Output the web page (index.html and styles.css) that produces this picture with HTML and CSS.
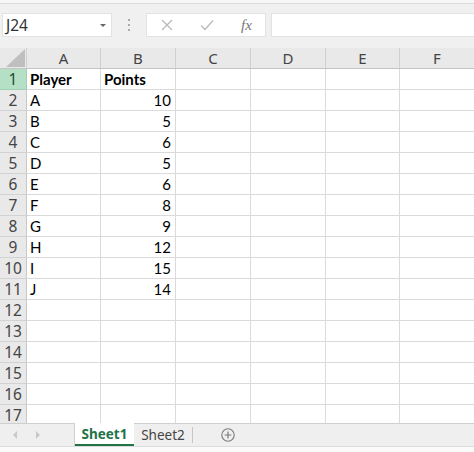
FILE: index.html
```html
<!DOCTYPE html>
<html>
<head>
<meta charset="utf-8">
<link rel="stylesheet" href="styles.css">
</head>
<body>
<div class="app">
  <div class="edge"></div>
  <div class="fbar">
    <div class="namebox"><span class="nb-text">J24</span><span class="nb-arrow"></span></div>
    <div class="dots"><i></i><i></i><i></i></div>
    <div class="fbtns">
      <svg class="ico" width="14" height="14" viewBox="0 0 14 14"><path d="M2 2L12 12M12 2L2 12" stroke="#b9b9b9" stroke-width="1.3" fill="none"/></svg>
      <svg class="ico" width="16" height="14" viewBox="0 0 16 14"><path d="M2 7.5L6 11.5L14 2.5" stroke="#b9b9b9" stroke-width="1.3" fill="none"/></svg>
      <span class="fx">fx</span>
    </div>
    <div class="finput"></div>
  </div>
  <div class="sheet">
    <div class="grid">
      <div class="corner"><svg width="19" height="18" viewBox="0 0 19 18"><path d="M0 18L19 18L19 0Z" fill="#bfbfbf"/></svg></div>
      <div class="ch">A</div><div class="ch">B</div><div class="ch">C</div><div class="ch">D</div><div class="ch">E</div><div class="ch last">F</div>

      <div class="rh sel">1</div><div class="c b">Player</div><div class="c b">Points</div><div class="c"></div><div class="c"></div><div class="c"></div><div class="c last"></div>
      <div class="rh">2</div><div class="c">A</div><div class="c n">10</div><div class="c"></div><div class="c"></div><div class="c"></div><div class="c last"></div>
      <div class="rh">3</div><div class="c">B</div><div class="c n">5</div><div class="c"></div><div class="c"></div><div class="c"></div><div class="c last"></div>
      <div class="rh">4</div><div class="c">C</div><div class="c n">6</div><div class="c"></div><div class="c"></div><div class="c"></div><div class="c last"></div>
      <div class="rh">5</div><div class="c">D</div><div class="c n">5</div><div class="c"></div><div class="c"></div><div class="c"></div><div class="c last"></div>
      <div class="rh">6</div><div class="c">E</div><div class="c n">6</div><div class="c"></div><div class="c"></div><div class="c"></div><div class="c last"></div>
      <div class="rh">7</div><div class="c">F</div><div class="c n">8</div><div class="c"></div><div class="c"></div><div class="c"></div><div class="c last"></div>
      <div class="rh">8</div><div class="c">G</div><div class="c n">9</div><div class="c"></div><div class="c"></div><div class="c"></div><div class="c last"></div>
      <div class="rh">9</div><div class="c">H</div><div class="c n">12</div><div class="c"></div><div class="c"></div><div class="c"></div><div class="c last"></div>
      <div class="rh">10</div><div class="c">I</div><div class="c n">15</div><div class="c"></div><div class="c"></div><div class="c"></div><div class="c last"></div>
      <div class="rh">11</div><div class="c">J</div><div class="c n">14</div><div class="c"></div><div class="c"></div><div class="c"></div><div class="c last"></div>
      <div class="rh">12</div><div class="c"></div><div class="c"></div><div class="c"></div><div class="c"></div><div class="c"></div><div class="c last"></div>
      <div class="rh">13</div><div class="c"></div><div class="c"></div><div class="c"></div><div class="c"></div><div class="c"></div><div class="c last"></div>
      <div class="rh">14</div><div class="c"></div><div class="c"></div><div class="c"></div><div class="c"></div><div class="c"></div><div class="c last"></div>
      <div class="rh">15</div><div class="c"></div><div class="c"></div><div class="c"></div><div class="c"></div><div class="c"></div><div class="c last"></div>
      <div class="rh">16</div><div class="c"></div><div class="c"></div><div class="c"></div><div class="c"></div><div class="c"></div><div class="c last"></div>
      <div class="rh">17</div><div class="c"></div><div class="c"></div><div class="c"></div><div class="c"></div><div class="c"></div><div class="c last"></div>
    </div>
  </div>
  <div class="tabs">
    <div class="nav">
      <svg width="8" height="10" viewBox="0 0 8 10"><path d="M6 1L2 5L6 9Z" fill="#c8c8c8"/></svg>
      <svg width="8" height="10" viewBox="0 0 8 10"><path d="M2 1L6 5L2 9Z" fill="#c8c8c8"/></svg>
    </div>
    <div class="tab active">Sheet1</div>
    <div class="tab">Sheet2</div>
    <div class="tsep"></div>
    <div class="add"><svg width="14" height="14" viewBox="0 0 14 14"><circle cx="7" cy="7" r="6.2" stroke="#7a7a7a" stroke-width="1.1" fill="none"/><path d="M7 3.6V10.4M3.6 7H10.4" stroke="#7a7a7a" stroke-width="1.2"/></svg></div>
  </div>
  <div class="foot"></div>
</div>
</body>
</html>
```

FILE: styles.css
```css
html, body {
  margin: 0;
  padding: 0;
  background: #ffffff;
}
.app {
  width: 474px;
  height: 452px;
  overflow: hidden;
  display: flex;
  flex-direction: column;
  font-family: "Noto Sans", "Open Sans", sans-serif;
}
.edge {
  height: 3px;
  flex: none;
  background: #f6f6f6;
  border-bottom: 1px solid #dcdcdc;
}
.fbar {
  flex: none;
  height: 44px;
  box-sizing: border-box;
  background: #f0f0f0;
  display: flex;
  align-items: flex-start;
  padding-top: 9px;
  padding-left: 2px;
}
.namebox {
  width: 110px;
  height: 24px;
  background: #fff;
  box-sizing: border-box;
  border: 1px solid #e2e2e2;
  display: flex;
  align-items: center;
  justify-content: space-between;
  padding: 0 4px 0 3px;
}
.nb-text {
  font-family: "Noto Sans", sans-serif;
  font-size: 15.5px;
  color: #333;
}
.nb-arrow {
  width: 0;
  height: 0;
  border-left: 3px solid transparent;
  border-right: 3px solid transparent;
  border-top: 3px solid #666;
  margin-right: 1px;
}
.dots {
  width: 34px;
  height: 24px;
  display: flex;
  flex-direction: column;
  align-items: center;
  justify-content: center;
  gap: 3px;
}
.dots i {
  display: block;
  width: 2px;
  height: 2px;
  background: #aaa;
}
.fbtns {
  width: 120px;
  height: 24px;
  background: #fff;
  box-sizing: border-box;
  border: 1px solid #e2e2e2;
  display: flex;
  align-items: center;
  padding-left: 13px;
  gap: 25px;
}
.fx {
  font-family: "Liberation Serif", serif;
  font-style: italic;
  font-size: 15px;
  color: #777;
  margin-left: 1px;
}
.finput {
  margin-left: 5px;
  flex: 1;
  height: 24px;
  background: #fff;
  box-sizing: border-box;
  border: 1px solid #e2e2e2;
  border-right: none;
}
.sheet {
  flex: 1;
  overflow: hidden;
  min-height: 0;
}
.grid {
  display: grid;
  grid-template-columns: 27px 74px 75px 75px 75px 74px 74px;
  grid-auto-rows: 21px;
}
.grid > div {
  box-sizing: border-box;
  border-right: 1px solid #dadada;
  border-bottom: 1px solid #dadada;
}
.corner {
  background: #e9e9e9;
  display: flex;
  align-items: flex-end;
  justify-content: flex-end;
  padding: 0 1px 1px 0;
  border-bottom-color: #c4c4c4 !important;
  border-right-color: #d0d0d0 !important;
}
.corner svg { display: block; }
.ch {
  background: #e9e9e9;
  border-bottom-color: #c4c4c4 !important;
  border-right-color: #d0d0d0 !important;
  font-size: 15px;
  color: #444;
  text-align: center;
  line-height: 20px;
}
.rh {
  background: #e9e9e9;
  border-right-color: #c8c8c8 !important;
  border-bottom-color: #d2d2d2 !important;
  font-size: 15.5px;
  color: #444;
  text-align: center;
  line-height: 20px;
}
.rh.sel {
  background: #b5e0c6;
  border-right-color: #9fcfb2 !important;
  border-bottom-color: #9fcfb2 !important;
  color: #1e4e32;
}
.c {
  font-family: "Lato", "Liberation Sans", sans-serif;
  font-size: 15px;
  color: #000;
  line-height: 20px;
  padding: 0 4px 0 3px;
  white-space: nowrap;
  overflow: hidden;
}
.c.b { font-weight: bold; }
.c.n { text-align: right; }
.last { border-right: none !important; }
.tabs {
  flex: none;
  height: 23px;
  box-sizing: border-box;
  background: #efefef;
  border-top: 1px solid #cfcfcf;
  display: flex;
  align-items: stretch;
}
.nav {
  width: 75px;
  display: flex;
  align-items: center;
  padding-left: 11px;
  gap: 15px;
  box-sizing: border-box;
  border-right: 1px solid #cfcfcf;
}
.nav svg { display: block; }
.tab {
  font-size: 13.5px;
  color: #444;
  display: flex;
  align-items: center;
  justify-content: center;
  box-sizing: border-box;
  margin-top: -1px;
  white-space: nowrap;
}
.tab.active {
  width: 59px;
  background: #fff;
  color: #217346;
  font-weight: bold;
  border-bottom: 2px solid #217346;
  padding-top: 1px;
}
.tab:not(.active) {
  width: 58px;
}
.tsep {
  width: 1px;
  background: #c6c6c6;
  margin: 3px 0 3px 0;
}
.add {
  margin-left: 28px;
  display: flex;
  align-items: center;
}
.add svg { display: block; }
.foot {
  flex: none;
  height: 6px;
  box-sizing: border-box;
  background: #fafafa;
  border-top: 1px solid #dcdcdc;
}
```
